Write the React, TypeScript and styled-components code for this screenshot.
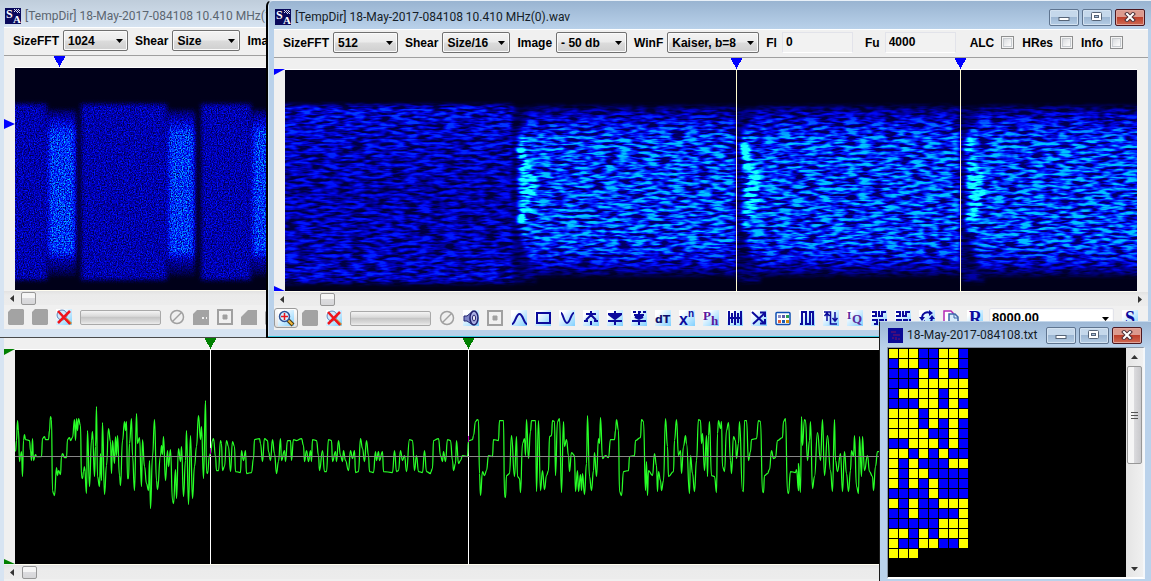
import React from "react";
import styled, { createGlobalStyle, css } from "styled-components";

const GlobalStyle = createGlobalStyle`
  * { box-sizing: border-box; }
  html, body, #root { height: 100%; }
  body { margin: 0; overflow: hidden; background: #f0f0f0; }
  button, input, select { font: inherit; color: inherit; margin: 0; padding: 0; }
  svg { display: block; }
`;

/* ---------- desktop and windows ---------- */

const Desktop = styled.main`
  position: relative;
  height: 100vh;
  overflow: hidden;
  background: #f0f0f0;
  font: bold 12px/16px "Liberation Sans", Arial, sans-serif;
  color: #000;
`;

const WindowBase = styled.section`
  position: absolute;
  display: flex;
  flex-direction: column;
  overflow: hidden;
`;

const BackWindow = styled(WindowBase)`
  top: 0;
  left: 0;
  width: 50%;
  padding: 0 4px 8px;
  background: linear-gradient(#bfcddb, #d7e4f2 28px);
  border-bottom: 1px solid #4a4a4a;
`;

const FrontWindow = styled(WindowBase)`
  top: 0;
  left: 266px;
  right: 0;
  padding: 0 3px 7px 6px;
  background: linear-gradient(#99b4d1, #b9d1ea 28px);
  border: 1px solid #000;
  border-left-width: 2px;
  border-top-color: #e8f0f8;
  border-right: 0;
  border-top-left-radius: 6px;
  box-shadow: inset 0 -1px 0 #35c9e0, inset 1px 0 0 #d5e6f6;
`;

const WaveWindow = styled(WindowBase)`
  top: 338px;
  left: 0;
  right: 0;
  bottom: 0;
  padding-left: 4px;
  background: #d7e4f2;
`;

const TextWindow = styled(WindowBase)`
  top: 321px;
  left: 879px;
  right: 0;
  bottom: 0;
  padding: 0 6px 2px 7px;
  background: linear-gradient(#9db8d6, #bad2eb 26px);
  border-left: 1px solid #1c1c1c;
  border-top: 1px solid #c5d8ec;
`;

const TitleBar = styled.header<{ $dim?: boolean; $h: number }>`
  flex: none;
  display: flex;
  align-items: center;
  gap: 4px;
  height: ${(p) => p.$h}px;
  padding: ${(p) => (p.$h > 25 ? 4 : 1)}px 3px 0 1px;
  font: 12px/16px Roboto, "Open Sans", sans-serif;
  color: ${(p) => (p.$dim ? "#5b6570" : "#141c26")};
  white-space: nowrap;
`;

const TitleText = styled.h1`
  flex: 1;
  min-width: 0;
  margin: 0;
  font: inherit;
  overflow: hidden;
`;

const Client = styled.div`
  flex: 1;
  min-height: 0;
  display: flex;
  flex-direction: column;
  background: #f0f0f0;
`;

const WaveClient = styled(Client)`
  padding-bottom: 2px;
`;

const CaptionButtons = styled.div`
  display: flex;
  gap: 3px;
`;

const CaptionButton = styled.button<{ $close?: boolean }>`
  display: grid;
  place-items: center;
  width: 30px;
  height: 17px;
  border: 1px solid ${(p) => (p.$close ? "#4c1820" : "#5f7590")};
  border-radius: 2px;
  box-shadow: inset 0 0 0 1px ${(p) => (p.$close ? "#e0a59b" : "#d3e2f1")};
  background: ${(p) =>
    p.$close
      ? "linear-gradient(#dc9a8e 45%, #bd3f2b 50%, #cf6a53)"
      : "linear-gradient(#c5d8eb 45%, #9db7d3 50%, #b5cde5)"};
`;

function Caption() {
  return (
    <CaptionButtons>
      <CaptionButton aria-label="Minimize">
        <svg width="12" height="9">
          <rect x="1" y="4.500" width="10" height="3" fill="#fff" stroke="#566477" />
        </svg>
      </CaptionButton>
      <CaptionButton aria-label="Maximize">
        <svg width="12" height="10">
          <rect x=".5" y=".5" width="10" height="8" rx="1" fill="#fff" stroke="#566477" />
          <rect x="3.500" y="3.500" width="4" height="2" fill="#a9c0da" stroke="#566477" />
        </svg>
      </CaptionButton>
      <CaptionButton $close aria-label="Close">
        <svg width="12" height="10" strokeLinecap="square">
          <path d="M3 2l6 6M9 2l-6 6" stroke="#4d3038" strokeWidth="4" />
          <path d="M3 2l6 6M9 2l-6 6" stroke="#fff" strokeWidth="2" />
        </svg>
      </CaptionButton>
    </CaptionButtons>
  );
}

function AppLogo() {
  return (
    <svg width="16" height="16" overflow="visible" role="img" aria-label="SA">
      <rect width="16" height="16" fill="#0a0a5c" />
      <path d="M9 1h1M11 1h1M13 1h1M10 2h1M12 2h1M14 2h1M9 3h1M11 3h1M13 3h1M12 4h1M14 4h1" stroke="#dde" transform="translate(0 .5)" />
      <g fill="#fff" fontFamily="Liberation Serif" fontWeight="bold">
        <text x="1" y="10" fontSize="12">S</text>
        <text x="8" y="15" fontSize="11">A</text>
      </g>
    </svg>
  );
}

/* ---------- settings bar ---------- */

const SettingsBar = styled.div`
  flex: none;
  display: flex;
  align-items: center;
  gap: 7px;
  height: 29px;
  padding: 0 0 2px 9px;
  border-top: 1px solid #fff;
  border-bottom: 1px solid #a0a0a0;
  white-space: nowrap;
  overflow: hidden;
`;

const Field = styled.label<{ $gap?: number }>`
  display: flex;
  align-items: center;
  gap: ${(p) => p.$gap ?? 4}px;
`;

const ValueGroup = styled.div`
  display: flex;
  gap: 12px;
`;

const CheckGroup = styled.div`
  display: flex;
  gap: 8px;
  margin-left: 7px;
`;

const SelectBox = styled.span<{ $w: number }>`
  position: relative;
  display: block;
  width: ${(p) => p.$w}px;
`;

const Select = styled.select`
  appearance: none;
  display: block;
  width: 100%;
  height: 21px;
  padding-left: 4px;
  border: 1px solid #707070;
  border-radius: 2px;
  background: linear-gradient(#f3f3f3, #ebebeb 48%, #dcdcdc 52%, #cfcfcf);
  box-shadow: inset 0 0 0 1px #fafafa;
`;

const Arrow = styled.svg`
  position: absolute;
  right: 5px;
  top: 9px;
  pointer-events: none;
`;

const NumberBox = styled.input`
  width: 71px;
  height: 21px;
  padding: 0 3px 2px;
  border: 1px solid #e2e3ea;
  border-bottom-color: #fff;
  background: #f2f2f2;
`;

const Check = styled.input`
  appearance: none;
  width: 13px;
  height: 13px;
  border: 1px solid #8e8f8f;
  background: linear-gradient(135deg, #cfd2d6, #f8f8f8 70%);
  box-shadow: inset 0 0 0 1px #f4f4f4, inset 0 0 0 2px #c8ccd0;
`;

function Picker({ label, value, w }: { label: string; value: string; w: number }) {
  return (
    <Field>
      {label}
      <SelectBox $w={w}>
        <Select defaultValue={value}>
          <option>{value}</option>
        </Select>
        <Arrow width="7" height="4"><path d="M0 0h7L3.500 4z" /></Arrow>
      </SelectBox>
    </Field>
  );
}

function CommonSettings({ fft, shear }: { fft: string; shear: string }) {
  return (
    <>
      <Picker label="SizeFFT" value={fft} w={65} />
      <Picker label="Shear" value={shear} w={68} />
      <Picker label="Image" value="- 50 db" w={71} />
      <Picker label="WinF" value="Kaiser, b=8" w={92} />
    </>
  );
}

/* ---------- plots ---------- */

const PlotGrid = styled.div<{ $plain?: boolean }>`
  flex: 1;
  min-height: 0;
  display: grid;
  grid-template-columns: 11px minmax(0, 1fr) ${(p) => (p.$plain ? "0" : "11px")};
  grid-template-rows: 11px auto;
  ${(p) => p.$plain && css`grid-template-rows: 11px minmax(0, 1fr);`}
`;

const Ruler = styled.div`
  grid-column: 2;
  overflow: hidden;
`;

const Gutter = styled.div<{ $mid?: boolean }>`
  grid-column: 1;
  grid-row: 2;
  display: flex;
  flex-direction: column;
  justify-content: space-between;
  padding-top: ${(p) => (p.$mid ? 52 : 0)}px;
`;

const Plot = styled.div`
  grid-column: 2;
  grid-row: 2;
  overflow: hidden;
  border-top: 1px solid #fff;
  border-bottom: 1px solid #fffdf0;
  background: #000;
`;

function CornerMarks({ color }: { color: string }) {
  return (
    <>
      <svg width="11" height="6"><path d="M0 0h11L0 6z" fill={color} /></svg>
      <svg width="11" height="6"><path d="M0 0v5h11z" fill={color} /></svg>
    </>
  );
}

function RulerMarks({ at, color }: { at: number[]; color: string }) {
  return (
    <svg width="100%" height="11">
      {at.map((x) => (
        <path key={x} d={`M${x - 5.5} 0h12l-6 11z`} fill={color} shapeRendering="crispEdges" />
      ))}
    </svg>
  );
}

function SpectrumFilter({ id, freq, slope, bias }: { id: string; freq: string; slope: number; bias: number }) {
  return (
    <filter id={id} x="0" y="0" width="100%" height="100%" colorInterpolationFilters="sRGB">
      <feTurbulence type="fractalNoise" baseFrequency={freq} numOctaves={2} seed={7} result="n" />
      <feColorMatrix in="n" type="matrix" result="grain"
        values={`0 0 0 ${slope} ${bias}  0 0 0 ${slope} ${bias}  0 0 0 ${slope} ${bias}  0 0 0 0 1`} />
      <feGaussianBlur in="SourceGraphic" stdDeviation="2" result="level" />
      <feComposite in="grain" in2="level" operator="arithmetic" k1={1.3} k2={0} k3={0.25} k4={0} result="mix" />
      <feComponentTransfer in="mix">
        <feFuncR type="table" tableValues="0 0 0 0 0 0 0 0 0.1" />
        <feFuncG type="table" tableValues="0 0 0 0.04 0.24 0.5 0.7 0.9 1" />
        <feFuncB type="table" tableValues="0.1 0.4 0.7 0.98 1 1 1 1 1" />
        <feFuncA type="linear" slope="0" intercept="1" />
      </feComponentTransfer>
    </filter>
  );
}

const BURST = "M0 76L6 66L10 90L18 106L20 120L16 136L12 148L2 156L3 146L8 134L4 112L5 92Z";

function WideSpectrum() {
  return (
    <svg width="100%" height="221" viewBox="0 0 852 221" preserveAspectRatio="none" role="img" aria-label="Spectrogram">
      <defs>
        <SpectrumFilter id="wide" freq="0.075 0.33" slope={2.7} bias={-0.85} />
        <linearGradient id="quiet" x2="0" y2="1">
          <stop offset="0" stopColor="#545454" />
          <stop offset=".5" stopColor="#404040" />
          <stop offset="1" stopColor="#4a4a4a" />
        </linearGradient>
        <linearGradient id="loud" x2="0" y2="1">
          <stop offset="0" stopColor="#222" />
          <stop offset=".08" stopColor="#555" />
          <stop offset=".2" stopColor="#828282" />
          <stop offset=".8" stopColor="#828282" />
          <stop offset=".92" stopColor="#555" />
          <stop offset="1" stopColor="#181818" />
        </linearGradient>
      </defs>
      <g filter="url(#wide)">
        <rect width="852" height="221" fill="#000" />
        <rect x="-4" y="35" width="232" height="178" fill="url(#quiet)" />
        {[229, 453, 677].map((x) => (
          <g key={x}>
            <rect x={x} y="38" width="22" height="174" fill="#262626" />
            <path d={`M${x + 4} 66L${x + 20} 36H${x + 222}V206H${x + 20}L${x + 4} 156Z`} fill="url(#loud)" />
            <path d={BURST} transform={`translate(${x + 2} 0)`} fill="#fff" />
          </g>
        ))}
      </g>
      <path d="M451.500 0V221M675.500 0V221" stroke="#fffbd0" />
    </svg>
  );
}

function NarrowSpectrum() {
  return (
    <svg width="561" height="222" role="img" aria-label="Spectrogram overview">
      <defs>
        <SpectrumFilter id="narrow" freq="0.83 0.71" slope={1.9} bias={-0.45} />
        <linearGradient id="band" x2="0" y2="1">
          <stop offset="0" stopColor="#222" />
          <stop offset=".08" stopColor="#555" />
          <stop offset=".14" stopColor="#808080" />
          <stop offset=".85" stopColor="#808080" />
          <stop offset=".9" stopColor="#444" />
          <stop offset="1" stopColor="#111" />
        </linearGradient>
      </defs>
      <g filter="url(#narrow)">
        <rect width="561" height="222" fill="#000" />
        <rect x="-4" y="36" width="36" height="176" fill="#454545" />
        <rect x="66" y="36" width="86" height="176" fill="#454545" />
        <rect x="186" y="36" width="50" height="176" fill="#454545" />
        <rect x="33" y="42" width="28" height="166" fill="url(#band)" />
        <rect x="153" y="42" width="27" height="166" fill="url(#band)" />
        <rect x="237" y="42" width="27" height="166" fill="url(#band)" />
      </g>
    </svg>
  );
}

/* Samples of the trace as x,y pairs, three units to the pixel. */
const TRACE_A =
  "45,215 48,180 52,122 55,150 59,245 62,225 64,213 68,288 71,180 74,162 76,178 88,180 90,210 94,240 97,175 100,240 106,222 108,228 124,228 127,175 132,170 136,178 146,178 148,150 151,110 154,118 157,330 160,340 164,345 168,262 172,285 175,272 180,282 184,230 188,220 192,233 200,233 203,178 208,172 212,180 218,172 222,118 226,180 229,116 233,150 235,116 240,135 243,290 246,296 250,275 254,258 258,340 262,150 268,318 274,182 278,155 282,290 286,200 290,80 293,290 298,318 302,220 305,300 308,128 314,343 318,255 325,145 330,185 333,280 336,180 342,250 347,170 350,225 352,165 358,285 362,315 368,180 372,125 376,150 378,125 381,295 385,295 389,190 393,115 398,225 404,332 409,100 413,190 417,172 424,318 428,178 434,260 438,310 445,330 448,240 452,385 458,230 463,118 468,300 472,328 480,225 484,195 487,222 491,168 496,300 502,210 506,260 511,207 516,360 520,370 525,268 530,355 536,205 540,245 544,200 550,350 555,240 559,152 566,373 572,165 577,355 583,260 590,200 596,105 600,178 604,140 609,295 616,60 620,275 623,280 628,225 631,220 636,180 641,175 646,230 650,270 654,270 660,180 664,190 668,270 674,260 679,182 684,200 690,275 697,183 702,200 707,275 720,278 724,210 730,240 736,210 740,280 754,278 760,235 764,178 778,175 782,190 786,243 792,175 802,180 806,215 812,240 817,178 822,220 828,280 834,245 840,175 845,240 852,212 856,243 862,180 870,180 874,240 880,178 890,182 905,176 910,195 914,243 920,212 926,243 930,212 933,243 938,178 950,180 956,225 958,270 966,212 972,275 980,275 986,178 994,180 998,243 1006,215 1010,243 1014,180 1020,225 1026,243 1030,210 1036,240 1044,270 1050,212 1056,235 1062,212 1066,278 1074,275 1082,175 1088,205 1093,243 1099,180 1105,225 1109,275 1120,278 1125,215 1130,240 1134,215 1138,240 1146,215 1151,275 1176,278 1184,210 1190,275 1194,270 1202,210 1206,240 1212,225 1220,275 1228,178 1236,180 1242,270 1250,225 1256,275 1266,278 1273,210 1280,275 1290,280";
const TRACE_B =
  "0,278 6,265 10,182 26,175 31,225 36,245 40,215 45,243 52,178 62,180 66,240 70,270 75,250 80,180 86,250 92,240 96,226 112,228 115,182 118,182 128,178 130,165 135,125 141,118 145,122 148,280 151,345 156,275 162,285 170,270 174,225 186,228 190,178 204,182 208,120 220,122 224,345 226,352 230,285 238,280 245,165 252,290 258,170 263,290 268,295 271,338 276,190 282,175 286,225 290,118 294,235 300,155 305,122 315,122 318,335 324,122 330,330 336,270 342,328 348,285 354,270 357,170 364,165 367,122 372,125 376,285 382,125 388,116 394,338 400,125 404,200 410,178 415,225 418,275 424,218 432,225 437,335 442,270 446,335 450,282 455,330 458,280 462,343 468,250 473,105 478,290 484,332 490,270 494,218 499,290 505,175 508,190 512,112 518,235 526,225 534,232 540,178 552,178 556,150 560,118 565,150 569,335 574,345 580,275 594,272 598,228 612,226 616,180 632,172 635,118 640,125 645,330 648,245 652,345 656,272 668,285 673,220 678,255 683,335 686,275 690,300 695,332 700,300 706,115 712,200 716,290 730,275 733,180 739,118 744,225 750,212 754,280 760,200 765,165 770,190 778,340 781,225 786,280 792,335 798,240 805,118 810,120 814,190 818,160 823,270 830,165 832,290 835,165 838,125 844,285 854,290 858,338 862,160 866,120 870,145 873,125 877,260 884,275 890,150 896,128 900,240 905,280 911,168 915,180 919,235 924,190 929,125 936,330 939,335 942,120 948,122 954,240 960,215 965,178 980,175 985,122 990,125 996,335 1000,338 1004,285 1012,280 1018,268 1024,210 1030,235 1036,232 1042,180 1056,172 1060,125 1066,116 1071,335 1074,340 1080,275 1096,278 1100,268 1104,330 1106,250 1110,338 1114,108 1118,195 1122,118 1127,120 1132,240 1137,180 1142,125 1148,325 1154,290 1162,158 1172,240 1178,118 1184,285 1192,165 1200,270 1206,335 1212,118 1217,240 1222,275 1232,220 1236,335 1244,215 1250,280 1254,335 1260,270 1265,210 1270,230 1274,165 1280,320 1284,340 1288,168 1293,290 1298,170 1303,270 1312,225 1318,275 1326,290 1331,330 1336,260 1342,215 1350,215";

function toPixels(list: string, shift: number) {
  return list.split(" ").map((pair) => {
    const [x, y] = pair.split(",").map(Number);
    return [Math.floor((x + shift) / 3 - 15) + 0.5, Math.floor(y / 3) + 30.5];
  });
}

/* Joins the samples with S-curves: level at each sample, steep between them. */
function traceWave() {
  const points = [...toPixels(TRACE_A, 0), ...toPixels(TRACE_B, 1290)];
  return points
    .map(([x, y], i) => {
      if (i === 0) return `M${x} ${y}`;
      const [px, py] = points[i - 1];
      const mid = (px + x) / 2;
      return `C${mid} ${py} ${mid} ${y} ${x} ${y}`;
    })
    .join("");
}

const WAVE_PATH = traceWave();

function WaveTrace() {
  return (
    <svg width="1136" height="214" role="img" aria-label="Signal waveform">
      <path d="M195.500 0V214M453.500 0V214" stroke="#fff" />
      <path d={WAVE_PATH} fill="none" stroke="#28ff28" strokeWidth="1.250" strokeLinejoin="round" />
      <path d="M0 106.500H1136" stroke="#878787" />
      <path d="M195.500 98v6M453.500 86v6" stroke="#c000c0" />
    </svg>
  );
}

/* ---------- scroll bars ---------- */

const HTrack = styled.div`
  flex: none;
  display: flex;
  align-items: center;
  height: 14px;
  background: linear-gradient(#e2e2e2, #ebebeb 4px, #ececec);
`;

const ArrowButton = styled.button<{ $tall?: boolean }>`
  display: grid;
  place-items: center;
  width: 16px;
  height: ${(p) => (p.$tall ? 17 : 14)}px;
  border: 0;
  background: none;
`;

const HThumb = styled.div<{ $at: number }>`
  width: 15px;
  height: 13px;
  margin-left: ${(p) => p.$at}px;
  margin-right: auto;
  border: 1px solid #979797;
  border-radius: 2px;
  background: linear-gradient(#f5f5f5 45%, #dcdcdf 50%, #d6d6d8);
`;

function HScroll({ at, right }: { at: number; right?: boolean }) {
  return (
    <HTrack>
      <ArrowButton aria-label="Scroll left"><svg width="4" height="7"><path d="M4 0v7L0 3.500z" fill="#333" /></svg></ArrowButton>
      <HThumb $at={at} />
      {right && (
        <ArrowButton aria-label="Scroll right"><svg width="4" height="7"><path d="M0 0v7L4 3.500z" fill="#333" /></svg></ArrowButton>
      )}
    </HTrack>
  );
}

/* ---------- icon bar ---------- */

const IconBar = styled.div`
  flex: none;
  display: flex;
  align-items: center;
  gap: 8px;
  height: 24px;
  padding-left: 4px;
  overflow: hidden;
`;

const IconButton = styled.button<{ $framed?: boolean }>`
  flex: none;
  display: grid;
  place-items: center;
  width: 16px;
  height: 16px;
  border: 0;
  background: none;
  ${(p) =>
    p.$framed &&
    css`
      width: 24px;
      height: 20px;
      margin: 0 -4px;
      border: 1px solid #9a9a9a;
      border-radius: 3px;
      background: linear-gradient(#fdfdfd, #e0e0e0);
    `}
`;

const LevelMeter = styled.div`
  flex: none;
  width: 81px;
  height: 15px;
  border: 1px solid #a9a9a9;
  border-radius: 2px;
  background: linear-gradient(#f4f4f4, #dadada 40%, #c6c6c6 50%, #d9d9d9 80%, #ececec);
`;

const RateBox = styled(SelectBox)`
  margin: 0 0 0 -2px;
`;

const RateSelect = styled(Select)`
  background: #fff;
  border-color: #e2e3ea;
  padding-left: 2px;
  font-size: 13px;
`;

const INK = "#0b0b9c";

const GLYPHS: Record<string, React.ReactNode> = {
  arch: <path d="M1 14C4 14 5 4 8.500 4S13 14 16 14" strokeWidth="2" />,
  box: <path d="M2 3h13v10H2z" strokeWidth="2" />,
  vee: <path d="M2 3C4 3 5 13 8 13S12 3 15 3" strokeWidth="2" />,
  diodeUp: <path d="M8 1v4M3 4h10M8 5L3 10M8 5l5 5M1 11h4M11 11h4M8 11v4" strokeWidth="2" />,
  diodeDown: <path d="M8 1v14M1 4h14M4 6h8L8 9zM1 11h14" strokeWidth="2" />,
  diodeDots: <path d="M2 2h3M7 2h3M12 2h3M8 3v12M3 5h10M4 7h8L8 9zM1 11h14" strokeWidth="2" />,
  bars: <path d="M2 1v14M5 3v10M8 1v14M11 3v10M14 1v14M1 8h14" strokeWidth="2" />,
  cross: <path d="M1 2l13 12M2 14L14 3M9 2.500h5V7M9 13.500h5V9" strokeWidth="2" />,
  pulse: <path d="M1 14h2V2h4v12h4V2h3v13" strokeWidth="2" />,
  arrows: <path d="M1.500 6L4 3l2.500 3M4 3v8M1 2h6.500V14H14M12 2v9M9.500 8l2.500 3 2.500-3" strokeWidth="1.500" />,
  lines: <path d="M1 2h4v4H1M1 10h5v4H3M8 1v5h3V2h4M9 15v-5h3v4h3V9" strokeWidth="2" />,
  cycle: (
    <>
      <path d="M3 7a5.500 5.500 0 0 1 8-4M13 9a5.500 5.500 0 0 1-8 4" strokeWidth="2" />
      <path d="M0 7h6l-3 4zM10 9h6l-3-4zM10 0v6l4-3zM6 10v6l-4-3z" fill={INK} stroke="none" />
    </>
  ),
};

const LETTERS: Record<string, React.ReactNode> = {
  dT: <text x="0" y="13" fontSize="11" fontFamily="DejaVu Sans" fontWeight="bold" fill="#10106c">dT</text>,
  Xn: (
    <g fontFamily="Liberation Sans" fontWeight="bold" fill={INK}>
      <text x="0" y="15" fontSize="16">x</text>
      <text x="9" y="7" fontSize="10">n</text>
    </g>
  ),
  Ph: (
    <g fontFamily="Liberation Serif" fontWeight="bold" fill="#5a189c">
      <text x="0" y="10" fontSize="13">P</text>
      <text x="8" y="15" fontSize="13">h</text>
    </g>
  ),
  IQ: (
    <g fontFamily="Liberation Serif" fontWeight="bold" fill="#5a2a9c">
      <text x="0" y="9" fontSize="11">I</text>
      <text x="5" y="13" fontSize="13">Q</text>
    </g>
  ),
  R: <text x="2" y="14" fontSize="18" fontFamily="Liberation Serif" fontWeight="bold" fill={INK}>R</text>,
  S: <text x="3" y="14" fontSize="18" fontFamily="Liberation Serif" fontWeight="bold" fill={INK}>S</text>,
};

const PICTURES: Record<string, React.ReactNode> = {
  zoom: (
    <>
      <rect width="16" height="16" fill="url(#tile)" />
      <path d="M10 10l5 5" stroke="#4a3410" strokeWidth="4" />
      <path d="M10 10l4.500 4.500" stroke="#f0b83c" strokeWidth="2" />
      <circle cx="6.500" cy="6.500" r="5" fill="#d4f0ff" stroke="#2c4f94" strokeWidth="1.500" />
      <path d="M3 6.500h7M6.500 3v7" stroke="#e8141c" strokeWidth="1.500" />
    </>
  ),
  unzoom: (
    <>
      <rect width="16" height="16" fill="url(#tile)" />
      <circle cx="6" cy="6" r="5" fill="#cfe8fb" stroke="#5d83b8" />
      <path d="M10 10l5 5" stroke="#c79a3c" strokeWidth="3" />
      <path d="M2 2l12 13M14 2L2 14" stroke="#f0141c" strokeWidth="2.500" />
    </>
  ),
  grayBox: <path d="M1 2l2-2h12l1 1v14l-1 1H1l-1-1V3z" fill="#a3a3a3" />,
  grayTag: <path d="M0 5l4-4h12v15H0zM9 8v2h2V8zm4 0v2h1V8z" fill="#a3a3a3" fillRule="evenodd" />,
  grayCut: <path d="M0 8l7-7h9v15H0z" fill="#a3a3a3" />,
  forbid: (
    <g fill="none" stroke="#a0a0a0" strokeWidth="1.500">
      <circle cx="8" cy="8" r="6.500" />
      <path d="M3.500 12.500l9-9" />
    </g>
  ),
  stop: (
    <g fill="none" stroke="#a0a0a0" strokeWidth="2">
      <path d="M1 1h14v14H1z" />
      <path d="M6 6h4v4H6z" fill="#a0a0a0" strokeWidth="1" />
    </g>
  ),
  speaker: (
    <>
      <rect width="16" height="16" fill="url(#tile)" />
      <path d="M1 6h3l6-5v14l-6-4H1z" fill="#7f86c8" stroke="#20206c" />
      <ellipse cx="11" cy="8" rx="4" ry="7" fill="#aab0e4" stroke="#20206c" strokeWidth="1.500" />
      <ellipse cx="11" cy="8" rx="1.500" ry="3" fill="#fff" stroke="#20206c" />
    </>
  ),
  palette: (
    <>
      <rect x="1" y="2.500" width="14" height="12" rx="1" fill="#fff" stroke="#1050b4" strokeWidth="1.500" />
      <path d="M3 5h3v3H3z" fill="#8c8cc4" />
      <path d="M7 5h3v3H7z" fill="#5a5aa8" />
      <path d="M11 5h3v3h-3z" fill="#28a050" />
      <path d="M3 10h3v3H3z" fill="#e06038" />
      <path d="M7 10h3v3H7z" fill="#1c5cb4" />
      <path d="M11 10h3v3h-3z" fill="#d08c10" />
    </>
  ),
  pages: (
    <>
      <path d="M1 1h7l2 2v10H1z" fill="#fff" stroke="#b428b4" strokeWidth="1.500" />
      <path d="M6 4h6l3 3v9H6z" fill="#d8ecfb" stroke="#3c64a8" strokeWidth="1.500" />
      <path d="M11 4v4h4" fill="none" stroke="#3c64a8" />
    </>
  ),
};

function Icon({ name }: { name: string }) {
  const framed = name === "zoom";
  return (
    <IconButton $framed={framed} aria-label={name}>
      <svg width="16" height="16" overflow="visible">
        {PICTURES[name] ?? (
          <>
            <rect width="16" height="16" fill="url(#tile)" />
            {LETTERS[name] ?? <g fill="none" stroke={INK}>{GLYPHS[name]}</g>}
          </>
        )}
      </svg>
    </IconButton>
  );
}

const Defs = styled.svg`
  position: absolute;
  width: 0;
  height: 0;
`;

/* ---------- bit map window ---------- */

const BitClient = styled.div`
  flex: 1;
  min-height: 0;
  display: flex;
  justify-content: space-between;
  border: 1px solid #8a97a6;
  border-right: 2px solid #f4f7fa;
  border-bottom: 2px solid #fff;
  background: #000;
`;

const BitGrid = styled.div`
  display: grid;
  grid-template-columns: repeat(8, 9px);
  grid-auto-rows: 9px;
  gap: 1px;
  padding: 1px;
`;

const Bit = styled.i<{ $on: boolean }>`
  background: ${(p) => (p.$on ? "#ffff00" : "#0000ff")};
`;

const VTrack = styled.div`
  display: flex;
  flex-direction: column;
  align-items: center;
  width: 17px;
  background: linear-gradient(90deg, #e4e4e4, #f0f0f0);
`;

const VThumb = styled.div`
  display: grid;
  place-items: center;
  width: 15px;
  height: 98px;
  margin: 1px 0 auto;
  border: 1px solid #979797;
  border-radius: 2px;
  background: linear-gradient(90deg, #f5f5f5 45%, #dadadd 50%, #c8c8cb);
`;

const BITS = [
  "11100110", "01100110", "00010100", "00011111", "01111011", "00011010", "11101111",
  "11101010", "11110010", "00111010", "11010100", "10100011", "10110000", "10101000",
  "00001000", "10100111", "00100001", "00000111", "11010111", "10011001", "111",
].join("");

/* ---------- page ---------- */

const BACK_ICONS = ["forbid", "grayTag", "stop", "grayCut", "grayBox"];
const FRONT_ICONS = [
  "forbid", "speaker", "stop", "arch", "box", "vee", "diodeUp", "diodeDown", "diodeDots", "dT", "Xn",
  "Ph", "bars", "cross", "palette", "pulse", "arrows", "IQ", "lines", "lines", "cycle", "pages", "R",
];

export default function App() {
  return (
    <Desktop>
      <GlobalStyle />
      <Defs aria-hidden="true">
        <linearGradient id="tile" x2="1" y2="1">
          <stop offset=".2" stopColor="#fff" />
          <stop offset="1" stopColor="#7fd0ff" />
        </linearGradient>
      </Defs>

      <BackWindow>
        <TitleBar $dim $h={27}>
          <AppLogo />
          <TitleText>[TempDir] 18-May-2017-084108 10.410 MHz(1).wav</TitleText>
        </TitleBar>
        <Client>
          <SettingsBar>
            <CommonSettings fft="1024" shear="Size" />
          </SettingsBar>
          <PlotGrid>
            <Ruler><RulerMarks at={[44]} color="#0000ff" /></Ruler>
            <Gutter $mid>
              <svg width="11" height="10"><path d="M0 0L11 5L0 10z" fill="#0000ff" /></svg>
            </Gutter>
            <Plot><NarrowSpectrum /></Plot>
          </PlotGrid>
          <HScroll at={1} />
          <IconBar>
            <Icon name="grayBox" />
            <Icon name="grayBox" />
            <Icon name="unzoom" />
            <LevelMeter />
            {BACK_ICONS.map((n) => <Icon key={n} name={n} />)}
          </IconBar>
        </Client>
      </BackWindow>

      <WaveWindow>
        <WaveClient>
          <PlotGrid $plain>
            <Ruler><RulerMarks at={[195, 453]} color="#008000" /></Ruler>
            <Gutter><CornerMarks color="#008000" /></Gutter>
            <Plot><WaveTrace /></Plot>
          </PlotGrid>
          <HScroll at={2} />
        </WaveClient>
      </WaveWindow>

      <FrontWindow>
        <TitleBar $h={28}>
          <AppLogo />
          <TitleText>[TempDir] 18-May-2017-084108 10.410 MHz(0).wav</TitleText>
          <Caption />
        </TitleBar>
        <Client>
          <SettingsBar>
            <CommonSettings fft="512" shear="Size/16" />
            <ValueGroup>
              <Field $gap={5}>Fl<NumberBox defaultValue="0" /></Field>
              <Field $gap={5}>Fu<NumberBox defaultValue="4000" /></Field>
            </ValueGroup>
            <CheckGroup>
              <Field $gap={7}>ALC<Check type="checkbox" /></Field>
              <Field $gap={7}>HRes<Check type="checkbox" /></Field>
              <Field $gap={7}>Info<Check type="checkbox" /></Field>
            </CheckGroup>
          </SettingsBar>
          <PlotGrid>
            <Ruler><RulerMarks at={[451, 675]} color="#0000ff" /></Ruler>
            <Gutter><CornerMarks color="#0000ff" /></Gutter>
            <Plot><WideSpectrum /></Plot>
          </PlotGrid>
          <HScroll at={30} right />
          <IconBar>
            <Icon name="zoom" />
            <Icon name="grayBox" />
            <Icon name="unzoom" />
            <LevelMeter />
            {FRONT_ICONS.map((n, i) => <Icon key={i} name={n} />)}
            <RateBox $w={125}>
              <RateSelect aria-label="Sample rate" defaultValue="8000.00"><option>8000.00</option></RateSelect>
              <Arrow width="7" height="4"><path d="M0 0h7L3.500 4z" /></Arrow>
            </RateBox>
            <Icon name="S" />
          </IconBar>
        </Client>
      </FrontWindow>

      <TextWindow>
        <TitleBar $h={25}>
          <svg width="15" height="15">
            <rect width="15" height="15" fill="#0a0a96" />
            <path d="M3 4h3M7 3v2M5 7h7M4 10h2M8 9v3M10 11h2" stroke="#7a1060" />
          </svg>
          <TitleText>18-May-2017-084108.txt</TitleText>
          <Caption />
        </TitleBar>
        <BitClient>
          <BitGrid>
            {BITS.split("").map((b, i) => <Bit key={i} $on={b === "1"} />)}
          </BitGrid>
          <VTrack>
            <ArrowButton $tall aria-label="Scroll up"><svg width="7" height="4"><path d="M0 4h7L3.500 0z" fill="#333" /></svg></ArrowButton>
            <VThumb>
              <svg width="7" height="8"><path d="M0 1.500h7M0 4.500h7M0 7.500h7" stroke="#555" /></svg>
            </VThumb>
            <ArrowButton $tall aria-label="Scroll down"><svg width="7" height="4"><path d="M0 0h7L3.500 4z" fill="#333" /></svg></ArrowButton>
          </VTrack>
        </BitClient>
      </TextWindow>
    </Desktop>
  );
}
